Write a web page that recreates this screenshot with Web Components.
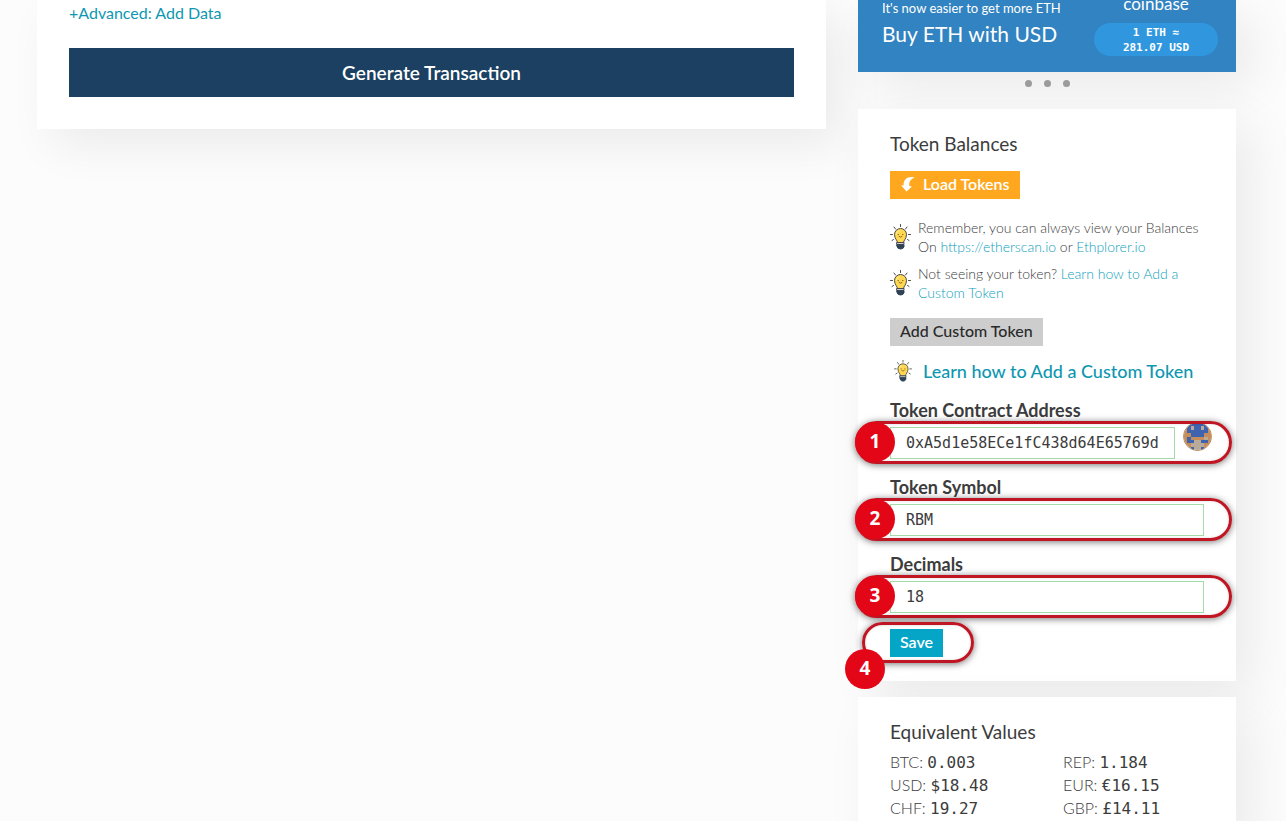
<!DOCTYPE html>
<html lang="en">
<head>
<meta charset="utf-8">
<meta name="viewport" content="width=device-width, initial-scale=1">
<title>Wallet</title>
<style>
    :root {
        --teal: #0e97b1;
        --teal-light: #0fa0bb;
        --text: #3c3c3c;
        --mono: "DejaVu Sans Mono", monospace;
        scrollbar-width: none;
    }

    body {
        margin: 0;
        background: #fcfcfc;
        color: var(--text);
        font-family: Lato, sans-serif;
        font-size: 14px;
    }
</style>
</head>
<body>

<wallet-page>
    <panel-card slot="main" class="send">
        <send-form></send-form>
    </panel-card>
    <promo-banner slot="side"></promo-banner>
    <panel-card slot="side">
        <token-balances></token-balances>
    </panel-card>
    <panel-card slot="side">
        <equivalent-values></equivalent-values>
    </panel-card>
</wallet-page>

<script>
/** Small helper: open a shadow root and fill it */
function render(el, html) {
    el.attachShadow({ mode: 'open' }).innerHTML = html;
}

/** Two column page: main content and sidebar */
class WalletPage extends HTMLElement {
    connectedCallback() {
        render(this, `
            <style>
                :host {
                    display: grid;
                    grid-template-columns: minmax(0, 1fr) 378px;
                    gap: 32px;
                    align-items: start;
                    padding: 0 50px 0 37px;
                }
                aside {
                    display: flex;
                    flex-direction: column;
                    gap: 16px;
                }
                ::slotted(promo-banner) { margin-bottom: -16px; }
                @media (max-width: 800px) {
                    :host { grid-template-columns: minmax(0, 1fr); padding: 0 16px; }
                }
            </style>
            <main><slot name="main"></slot></main>
            <aside><slot name="side"></slot></aside>
        `);
    }
}

/** White box with a soft shadow */
class PanelCard extends HTMLElement {
    connectedCallback() {
        render(this, `
            <style>
                :host {
                    display: block;
                    padding: 23px 32px 24px;
                    background: #fff;
                    box-shadow: 16px 16px 47px 0 rgba(0, 0, 0, 0.07);
                }
                :host(.send) { padding: 1px 32px 32px; }
            </style>
            <slot></slot>
        `);
    }
}

class SendForm extends HTMLElement {
    connectedCallback() {
        render(this, `
            <style>
                :host {
                    display: flex;
                    flex-direction: column;
                    align-items: flex-start;
                    gap: 23px;
                }
                a {
                    color: var(--teal);
                    font-size: 16px;
                    line-height: 24px;
                    text-decoration: none;
                }
                button {
                    width: 100%;
                    padding: 12px;
                    border: 0;
                    background: #1b4062;
                    color: #fff;
                    font: 600 19px/25px Lato, sans-serif;
                    cursor: pointer;
                }
            </style>
            <a href="#data">+Advanced: Add Data</a>
            <button type="button">Generate Transaction</button>
        `);
    }
}

/** Exchange offer with the carousel dots below */
class PromoBanner extends HTMLElement {
    connectedCallback() {
        render(this, `
            <style>
                :host { display: block; }
                .banner {
                    display: flex;
                    justify-content: space-between;
                    align-items: flex-end;
                    box-sizing: border-box;
                    height: 72px;
                    padding: 0 18px 16px 24px;
                    overflow: hidden;
                    background: #3183c1;
                    box-shadow: 16px 16px 47px 0 rgba(0, 0, 0, 0.07);
                    color: #fff;
                    text-decoration: none;
                }
                p { margin: 0; }
                .offer { padding-bottom: 9px; }
                .small { font-size: 13px; line-height: 18px; }
                .big { margin-top: 4px; font-size: 21px; line-height: 26px; }
                .rate { width: 124px; text-align: center; }
                .brand { margin-bottom: 9px; font-size: 17px; line-height: 20px; }
                .pill {
                    padding: 2px 24px 1px;
                    border-radius: 17px;
                    background: #3097df;
                    font: bold 11px/15px var(--mono);
                }
                .dots {
                    display: flex;
                    justify-content: center;
                    gap: 12px;
                    padding: 8px 0 22px;
                }
                .dots button {
                    width: 7px;
                    height: 7px;
                    padding: 0;
                    border: 0;
                    border-radius: 50%;
                    background: #9b9b9b;
                }
            </style>
            <a class="banner" href="#buy">
                <div class="offer">
                    <p class="small">It's now easier to get more ETH</p>
                    <p class="big">Buy ETH with USD</p>
                </div>
                <div class="rate">
                    <p class="brand">coinbase</p>
                    <p class="pill">1 ETH ≈ 281.07 USD</p>
                </div>
            </a>
            <div class="dots">
                <button type="button" aria-label="Slide 1"></button>
                <button type="button" aria-label="Slide 2"></button>
                <button type="button" aria-label="Slide 3"></button>
            </div>
        `);
    }
}

/** Smiling light bulb */
class BulbIcon extends HTMLElement {
    connectedCallback() {
        render(this, `
            <style>
                :host { display: block; flex: none; width: 21px; height: 26px; }
                svg { display: block; width: 100%; height: 100%; }
            </style>
            <svg viewBox="0 0 42 52" fill="none" stroke="#4a4a4a" stroke-width="2" stroke-linecap="round">
                <path d="M21 1v4M8 6l3 4M34 6l-3 4M1 21h4M37 21h4M4 33l3-2M38 33l-3-2"/>
                <path d="M15 37c0-5-6-7-6-16a12 12 0 0 1 24 0c0 9-6 11-6 16z" fill="#ffd84f"/>
                <path d="M13 20c0-4 3-6 6-6" stroke="#fff0a8"/>
                <path d="M16 21h1M25 21h1M18 25q3 3 6 0" stroke="#8a6a2a"/>
                <path d="M14 37h14v4H14z" fill="#c8ced4"/>
                <path d="M14 42h14v3q-1 5-7 5t-7-5z" fill="#2f4256" stroke="#2f4256"/>
            </svg>
        `);
    }
}

/** Icon with a short hint next to it */
class TipLine extends HTMLElement {
    connectedCallback() {
        render(this, `
            <style>
                :host {
                    display: flex;
                    align-items: center;
                    gap: 7px;
                    font-size: 14px;
                    font-weight: 300;
                    line-height: 19px;
                }
                p { margin: 0; }
                ::slotted(a) { color: var(--teal-light); text-decoration: none; }
                :host(.large) {
                    gap: 10px;
                    padding-left: 3px;
                    font-size: 18px;
                    font-weight: 500;
                    line-height: 26px;
                }
                :host(.large) ::slotted(a) { color: var(--teal); }
                :host(.large) bulb-icon { width: 20px; height: 22px; }
            </style>
            <bulb-icon></bulb-icon>
            <p><slot></slot></p>
        `);
    }
}

/** Numbered red frame laid over its parent */
class StepMark extends HTMLElement {
    connectedCallback() {
        render(this, `
            <style>
                :host {
                    position: absolute;
                    inset: -6px -28px -5px -35px;
                    border: 3px solid #c01523;
                    border-radius: 22px;
                    box-shadow: 0 1px 7px rgba(0, 0, 0, 0.55), inset 0 0 3px rgba(0, 0, 0, 0.15);
                    pointer-events: none;
                }
                span {
                    position: absolute;
                    top: -2px;
                    left: -3px;
                    width: 40px;
                    height: 40px;
                    border-radius: 50%;
                    background: #e30617;
                    color: #fff;
                    font: bold 19px/38px "Open Sans", sans-serif;
                    text-align: center;
                }
                :host(.corner) { inset: -7px -31px -6px -28px; }
                :host(.corner) span { top: 24px; left: -20px; }
            </style>
            <span>${this.getAttribute('number')}</span>
        `);
    }
}

/** Address avatar, drawn from a map of 8 x 8 cells */
class AddressIcon extends HTMLElement {
    connectedCallback() {
        const colors = { o: '#c58c5c', b: '#3f63ae', t: '#b9ab98' };
        const rows = [
            'obbbbbbo',
            'obtbbtbo',
            'obbbbbbo',
            'oobbbboo',
            'obooooto',
            'obbttbbo',
            'oottttoo',
            'oobttboo'
        ];
        const cells = rows.map((row, y) => [...row].map((c, x) =>
            `<rect x="${x}" y="${y}" width="1" height="1" fill="${colors[c]}"/>`
        ).join('')).join('');

        render(this, `
            <style>
                :host {
                    display: block;
                    flex: none;
                    box-sizing: border-box;
                    width: 29px;
                    height: 29px;
                    border: 1px solid #b98457;
                    border-radius: 50%;
                    overflow: hidden;
                }
                svg { display: block; }
            </style>
            <svg width="27" height="27" viewBox="0 0 8 8" shape-rendering="crispEdges">${cells}</svg>
        `);
    }
}

/** Labelled text box. Usage: <token-field label="" value="" step="1"></token-field> */
class TokenField extends HTMLElement {
    connectedCallback() {
        render(this, `
            <style>
                :host { display: block; }
                label {
                    display: block;
                    margin-bottom: 5px;
                    font-size: 18px;
                    font-weight: bold;
                    line-height: 24px;
                }
                .row {
                    position: relative;
                    display: flex;
                    align-items: flex-start;
                }
                input {
                    flex: 1;
                    min-width: 0;
                    box-sizing: border-box;
                    height: 32px;
                    padding: 0 12px 0 15px;
                    border: 1px solid #a5dba8;
                    background: #fff;
                    color: var(--text);
                    font: 15px var(--mono);
                }
                ::slotted(address-icon) { margin: -5px -8px 0 8px; }
            </style>
            <label for="field">${this.getAttribute('label')}</label>
            <div class="row">
                <input id="field" type="text" value="${this.getAttribute('value')}">
                <slot></slot>
                <step-mark number="${this.getAttribute('step')}"></step-mark>
            </div>
        `);
    }
}

class TokenBalances extends HTMLElement {
    connectedCallback() {
        render(this, `
            <style>
                :host { display: block; }
                h2 {
                    margin: 0 0 15px;
                    font-size: 19px;
                    font-weight: 400;
                    line-height: 24px;
                }
                button {
                    display: flex;
                    align-items: center;
                    gap: 7px;
                    padding: 3px 10px 5px;
                    border: 0;
                    color: #fff;
                    font: 600 16px/20px Lato, sans-serif;
                    cursor: pointer;
                }
                .load { background: #ffa81f; }
                .add { background: #cdcdcd; color: #2a2a2a; font-weight: 500; }
                .save { background: #05a5c8; }
                .tips {
                    display: flex;
                    flex-direction: column;
                    gap: 8px;
                    margin: 19px 0 16px;
                }
                .learn { margin: 12px 0 14px; }
                form {
                    display: flex;
                    flex-direction: column;
                    gap: 16px;
                }
                .action {
                    position: relative;
                    align-self: flex-start;
                }
            </style>
            <h2>Token Balances</h2>
            <button type="button" class="load">
                <svg width="16" height="16" viewBox="0 0 16 16" fill="#fff" aria-hidden="true">
                    <path d="M14.500 1.500C8 0 3.500 3 3.500 9.500L1 9.300 6.500 15.500 12 10.500 9.500 10C8.500 6.500 10.500 3 14.500 1.500z"/>
                </svg>
                Load Tokens
            </button>
            <div class="tips">
                <tip-line>Remember, you can always view your Balances On <a href="#etherscan">https://etherscan.io</a> or <a href="#ethplorer">Ethplorer.io</a></tip-line>
                <tip-line>Not seeing your token? <a href="#learn">Learn how to Add a Custom Token</a></tip-line>
            </div>
            <button type="button" class="add">Add Custom Token</button>
            <tip-line class="large learn"><a href="#learn">Learn how to Add a Custom Token</a></tip-line>
            <form>
                <token-field label="Token Contract Address" value="0xA5d1e58ECe1fC438d64E65769d" step="1">
                    <address-icon></address-icon>
                </token-field>
                <token-field label="Token Symbol" value="RBM" step="2"></token-field>
                <token-field label="Decimals" value="18" step="3"></token-field>
                <div class="action">
                    <button type="button" class="save">Save</button>
                    <step-mark class="corner" number="4"></step-mark>
                </div>
            </form>
        `);
    }
}

class EquivalentValues extends HTMLElement {
    connectedCallback() {
        const values = [
            ['BTC', '0.003'], ['REP', '1.184'],
            ['USD', '$18.48'], ['EUR', '€16.15'],
            ['CHF', '19.27'], ['GBP', '£14.11']
        ];

        render(this, `
            <style>
                :host { display: block; }
                h2 {
                    margin: 0 0 6px;
                    font-size: 19px;
                    font-weight: 400;
                    line-height: 24px;
                }
                ul {
                    display: grid;
                    grid-template-columns: 1fr 1fr;
                    column-gap: 32px;
                    margin: 0;
                    padding: 0;
                    list-style: none;
                    font-size: 16px;
                    font-weight: 300;
                    line-height: 23px;
                }
                li { height: 23px; }
                b { font: 16px/23px var(--mono); }
            </style>
            <h2>Equivalent Values</h2>
            <ul>${values.map(([name, value]) => `<li>${name}: <b>${value}</b></li>`).join('')}</ul>
        `);
    }
}

customElements.define('wallet-page', WalletPage);
customElements.define('panel-card', PanelCard);
customElements.define('send-form', SendForm);
customElements.define('promo-banner', PromoBanner);
customElements.define('bulb-icon', BulbIcon);
customElements.define('tip-line', TipLine);
customElements.define('step-mark', StepMark);
customElements.define('address-icon', AddressIcon);
customElements.define('token-field', TokenField);
customElements.define('token-balances', TokenBalances);
customElements.define('equivalent-values', EquivalentValues);
</script>
</body>
</html>
